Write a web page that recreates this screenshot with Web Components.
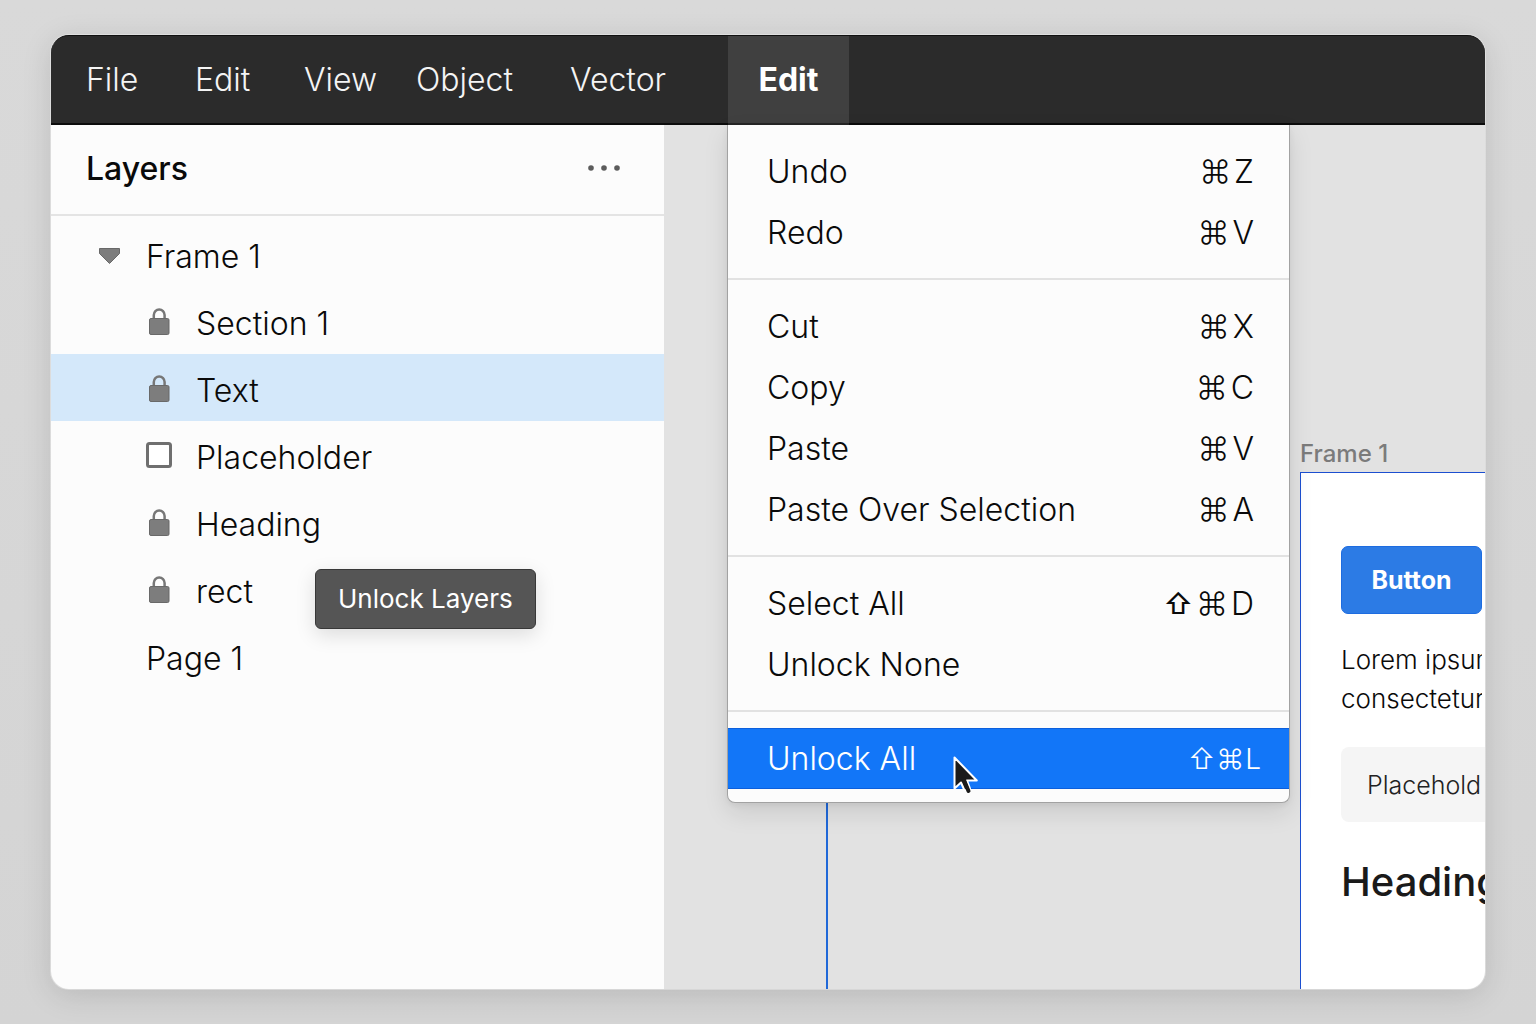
<!DOCTYPE html>
<html lang="en">
<head>
<meta charset="utf-8">
<title>Layers</title>
<style>
  html, body { margin: 0; min-height: 100%; }
  body {
    font-family: Inter, "Liberation Sans", sans-serif;
    color: #0a0a0a;
    background: #d7d7d7;
  }
</style>
</head>
<body>
<design-app></design-app>

<script>
const define = (name, markup, setup) => {
  const template = document.createElement('template');
  template.innerHTML = '<style>:host,*{box-sizing:border-box}button{font:inherit;color:inherit;background:none;border:0;padding:0;margin:0;text-align:left}</style>' + markup;
  customElements.define(name, class extends HTMLElement {
    connectedCallback() {
      if (this.shadowRoot) return;
      this.attachShadow({ mode: 'open' }).append(template.content.cloneNode(true));
      if (setup) setup(this, this.shadowRoot);
    }
  });
};

define('menu-title', `
  <style>
    :host { display: flex; }
    button { flex: 1; font-size: 32px; font-weight: 300; color: #f4f4f4; white-space: nowrap; border-bottom: 2px solid #0c0c0c; }
    :host([open]) button { background: #404040; color: #fff; font-weight: 700; text-align: center; border-bottom-color: #262626; }
  </style>
  <button type="button"><slot></slot></button>
`);

define('menu-bar', `
  <style>
    :host { display: block; background: #2b2b2b; border-top: 1px solid #111; box-shadow: inset 0 -2px #0c0c0c; }
    nav { display: grid; grid-template-columns: 109px 109px 112px 154px 158px 121px; grid-auto-rows: 89px; padding-left: 35px; }
    .anchor { position: relative; display: grid; }
    .drop { position: absolute; top: 100%; left: -1px; z-index: 5; }
  </style>
  <nav aria-label="Main menu">
    <menu-title>File</menu-title>
    <menu-title>Edit</menu-title>
    <menu-title>View</menu-title>
    <menu-title>Object</menu-title>
    <menu-title>Vector</menu-title>
    <div class="anchor">
      <menu-title open>Edit</menu-title>
      <div class="drop"><slot></slot></div>
    </div>
  </nav>
`);

define('drop-menu', `
  <style>
    :host {
      display: block; width: 563px; padding: 16px 0 13px;
      background: #fcfcfc; border: 1px solid #a2a2a2; border-top: 0;
      border-radius: 0 0 8px 8px;
      box-shadow: 0 10px 24px rgba(0,0,0,.1), 0 2px 6px rgba(0,0,0,.06);
    }
  </style>
  <slot></slot>
`);

define('menu-rule', `
  <style>
    :host { display: block; }
    hr { margin: 15px 0 16px; border: 0; height: 2px; background: #e2e2e2; }
  </style>
  <hr>
`);

define('menu-item', `
  <style>
    :host { display: block; }
    button {
      display: flex; align-items: center; justify-content: space-between;
      width: 100%; height: 61px; padding: 0 35px 0 39px;
      font-size: 32px; font-weight: 300; white-space: nowrap;
    }
    kbd { display: flex; align-items: center; gap: 3px; font: inherit; }
    .shift { font-size: 28px; font-weight: 500; }
    :host([active]) button { background: #1276f8; color: #fff; padding-right: 28px; border: 1px solid #0c5fdc; border-width: 1px 0; }
    :host([active]) kbd { gap: 1px; font-size: 28px; }
    :host([active]) .shift { font-weight: 300; }
  </style>
  <button type="button"><slot></slot><kbd></kbd></button>
`, (host, root) => {
  const kbd = root.querySelector('kbd');
  for (const key of host.getAttribute('keys') || '') {
    const span = document.createElement('span');
    span.textContent = key;
    if (key === '⇧') span.className = 'shift';
    kbd.append(span);
  }
});

define('mouse-pointer', `
  <style>:host { display: block; } svg { display: block; }</style>
  <svg width="28" height="42" viewBox="0 0 28 42" aria-hidden="true">
    <path d="M2.500 2.500V33.500L9 27.500L12.500 35.500L18 33.500L15 25.500H24.800Z" fill="#1b1b1b" stroke="#fff" stroke-width="2" stroke-linejoin="round"/>
    <path d="M11.500 24L16.500 36" fill="none" stroke="#1b1b1b" stroke-width="4" stroke-linecap="round"/>
  </svg>
`);

const icons = {
  lock: '<rect x="4.500" y="12.500" width="19.500" height="16" rx="1.500" fill="#7d7d7d" stroke="#696969"/><path d="M8.800 12V9a5.400 5.600 0 0 1 10.800 0V12" fill="none" stroke="#777" stroke-width="2.500"/>',
  box: '<rect x="2.500" y="3.500" width="23" height="23" rx="2" fill="#fff" stroke="#6f6f6f" stroke-width="3"/>',
  arrow: '<path d="M4.500 9.500H24.500V14.500L14.500 24.500L4.500 14.500Z" fill="#7d7d7d" stroke="#686868"/>'
};

define('layer-row', `
  <style>
    :host { display: block; }
    button {
      display: flex; align-items: center; width: 100%; height: 67px;
      padding: 0 0 0 94px; font-size: 32px; font-weight: 300; white-space: nowrap;
    }
    svg { width: 28px; height: 30px; flex: none; margin-right: 23px; }
    .label { padding-top: 5px; }
    :host([level="0"]) button { padding-left: 44px; }
    :host([level="0"]:not([icon])) button { padding-left: 95px; }
    :host([selected]) button { background: #d4e8fa; }
  </style>
  <button type="button"><span class="label"><slot></slot></span></button>
`, (host, root) => {
  const icon = icons[host.getAttribute('icon')];
  if (icon) root.querySelector('button').insertAdjacentHTML('afterbegin',
    '<svg viewBox="0 0 28 30" aria-hidden="true">' + icon + '</svg>');
});

define('layers-panel', `
  <style>
    :host { position: relative; display: block; background: #fcfcfc; }
    header {
      display: flex; align-items: center; justify-content: space-between;
      height: 91px; padding: 0 43px 2px 35px; border-bottom: 2px solid #e4e4e4;
    }
    h2 { margin: 0; font-size: 32px; font-weight: 500; }
    button, svg { display: block; }
    .list { padding-top: 4px; }
    .tip { position: absolute; left: 264px; top: 444px; }
  </style>
  <header>
    <h2>Layers</h2>
    <button type="button" aria-label="More options">
      <svg width="34" height="10" viewBox="0 0 34 10"><g fill="#5c5c5c"><circle cx="4" cy="4" r="2.800"/><circle cx="17" cy="4" r="2.800"/><circle cx="30" cy="4" r="2.800"/></g></svg>
    </button>
  </header>
  <div class="list"><slot></slot></div>
  <div class="tip"><slot name="tip"></slot></div>
`);

define('tool-tip', `
  <style>
    :host {
      display: block; padding: 0 22px; line-height: 58px; font-size: 26px; color: #fff;
      white-space: nowrap; background: #555; border: 1px solid #383838; border-radius: 6px;
      box-shadow: 0 6px 20px rgba(0,0,0,.13);
    }
  </style>
  <slot></slot>
`);

define('canvas-frame', `
  <style>
    :host { display: flex; flex-direction: column; }
    .name { font-size: 24px; line-height: 36px; font-weight: 500; color: #7b7b7b; }
    .sheet {
      flex: 1; padding: 73px 40px; background: #fff; white-space: nowrap;
      border: 1px solid #1c4fd0; border-right: 0; border-bottom: 0;
    }
    .sheet > button {
      display: block; width: 141px; height: 68px; text-align: center;
      font-size: 25px; font-weight: 700; color: #fff; background: #2c7be5;
      border: 1px solid #1d6ce0; border-radius: 7px;
    }
    p { width: 141px; overflow: hidden; margin: 26px 0 29px; font-size: 26px; line-height: 39px; font-weight: 300; }
    input {
      display: block; width: 152px; height: 75px; padding: 0 11px 0 26px; font: inherit;
      font-size: 25px; font-weight: 300; color: #111; background: #f5f5f5; border: 0; border-radius: 8px;
    }
    input::placeholder { color: #222; opacity: 1; }
    h1 { margin: 36px 0 0; font-size: 40px; line-height: 48px; font-weight: 500; color: #1a1a1a; }
  </style>
  <div class="name">Frame 1</div>
  <div class="sheet">
    <button type="button">Button</button>
    <p>Lorem ipsum<br>consectetur</p>
    <input type="text" placeholder="Placeholder" aria-label="Placeholder">
    <h1>Heading</h1>
  </div>
`);

define('design-canvas', `
  <style>
    :host { position: relative; display: block; overflow: hidden; background: #e2e2e2; }
    .guide { position: absolute; left: 162px; top: 347px; bottom: 0; border-left: 2px solid #2068d8; }
    canvas-frame { position: absolute; left: 636px; top: 311px; bottom: 0; width: 440px; }
  </style>
  <div class="guide"></div>
  <canvas-frame></canvas-frame>
`);

define('design-app', `
  <style>
    :host { display: flex; min-height: 100vh; padding: 35px 51px; background: linear-gradient(#d9d9d9, #d4d4d4); }
    .window {
      position: relative; flex: 1; display: flex; flex-direction: column; border-radius: 18px;
      box-shadow: 0 0 0 1px rgba(255,255,255,.35), 0 6px 30px rgba(0,0,0,.13);
    }
    menu-bar { border-radius: 18px 18px 0 0; }
    .work { flex: 1; display: grid; grid-template-columns: 613px minmax(0, 1fr); border-radius: 0 0 18px 18px; overflow: hidden; }
    .pointer { position: absolute; left: 901px; top: 720px; z-index: 9; pointer-events: none; }
  </style>
  <div class="window">
    <menu-bar>
      <drop-menu>
        <menu-item keys="⌘Z">Undo</menu-item>
        <menu-item keys="⌘V">Redo</menu-item>
        <menu-rule></menu-rule>
        <menu-item keys="⌘X">Cut</menu-item>
        <menu-item keys="⌘C">Copy</menu-item>
        <menu-item keys="⌘V">Paste</menu-item>
        <menu-item keys="⌘A">Paste Over Selection</menu-item>
        <menu-rule></menu-rule>
        <menu-item keys="⇧⌘D">Select All</menu-item>
        <menu-item>Unlock None</menu-item>
        <menu-rule></menu-rule>
        <menu-item keys="⇧⌘L" active>Unlock All</menu-item>
      </drop-menu>
    </menu-bar>
    <div class="work">
      <layers-panel>
        <layer-row level="0" icon="arrow">Frame 1</layer-row>
        <layer-row icon="lock">Section 1</layer-row>
        <layer-row icon="lock" selected>Text</layer-row>
        <layer-row icon="box">Placeholder</layer-row>
        <layer-row icon="lock">Heading</layer-row>
        <layer-row icon="lock">rect</layer-row>
        <layer-row level="0">Page 1</layer-row>
        <tool-tip slot="tip" role="tooltip">Unlock Layers</tool-tip>
      </layers-panel>
      <design-canvas></design-canvas>
    </div>
    <mouse-pointer class="pointer"></mouse-pointer>
  </div>
`);
</script>
</body>
</html>
